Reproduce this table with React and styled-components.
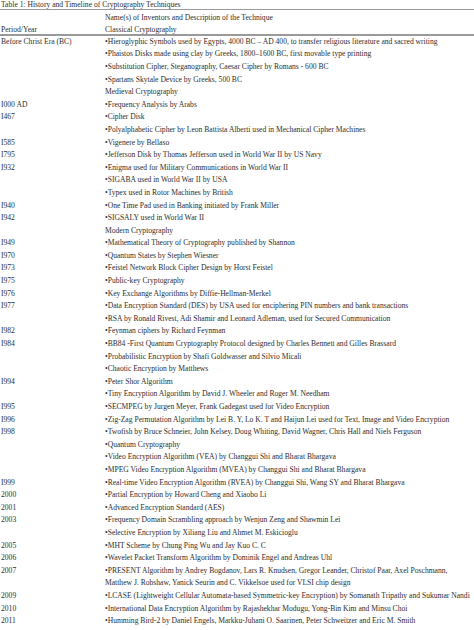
import React from 'react'
import styled, { createGlobalStyle } from 'styled-components'

const GlobalStyle = createGlobalStyle`
  html, body {
    margin: 0;
    padding: 0;
    background: #fff;
  }
`

const Page = styled.div`
  width: 474px;
  font-family: 'Liberation Serif', 'Times New Roman', serif;
  font-size: 7.6px;
  color: #2e2e2e;
`

const Caption = styled.div`
  height: 9px;
  line-height: 9px;
  padding-left: 1px;
  white-space: nowrap;
  border-bottom: 1.5px solid #9a9a9a;
`

const Table = styled.table`
  width: 100%;
  border-collapse: collapse;
  table-layout: fixed;
`

const HeadBody = styled.thead`
  border-bottom: 2px solid #9a9a9a;
`

const Row = styled.tr`
  height: ${(p) => p.$height || 12.6}px;
`

const YearCell = styled.td`
  width: 104px;
  padding: 0 0 0 1px;
  white-space: nowrap;
  vertical-align: middle;
`

const DescCell = styled.td`
  padding: 0;
  white-space: nowrap;
  vertical-align: middle;
`

const rows = [
  ['Before Christ Era (BC)', '•Hieroglyphic Symbols used by Egypts, 4000 BC – AD 400, to transfer religious literature and sacred writing'],
  ['', '•Phaistos Disks made using clay by Greeks, 1800–1600 BC, first movable type printing'],
  ['', '•Substitution Cipher, Steganography, Caesar Cipher by Romans - 600 BC'],
  ['', '•Spartans Skytale Device by Greeks, 500 BC'],
  ['', 'Medieval Cryptography'],
  ['I000 AD', '•Frequency Analysis by Arabs'],
  ['I467', '•Cipher Disk'],
  ['', '•Polyalphabetic Cipher by Leon Battista Alberti used in Mechanical Cipher Machines'],
  ['I585', '•Vigenere by Bellaso'],
  ['I795', '•Jefferson Disk by Thomas Jefferson used in World War II by US Navy'],
  ['I932', '•Enigma used for Military Communications in World War II'],
  ['', '•SIGABA used in World War II by USA'],
  ['', '•Typex used in Rotor Machines by British'],
  ['I940', '•One Time Pad used in Banking initiated by Frank Miller'],
  ['I942', '•SIGSALY used in World War II'],
  ['', 'Modern Cryptography'],
  ['I949', '•Mathematical Theory of Cryptography published by Shannon'],
  ['I970', '•Quantum States by Stephen Wiesner'],
  ['I973', '•Feistel Network Block Cipher Design by Horst Feistel'],
  ['I975', '•Public-key Cryptography'],
  ['I976', '•Key Exchange Algorithms by Diffie-Hellman-Merkel'],
  ['I977', '•Data Encryption Standard (DES) by USA used for enciphering PIN numbers and bank transactions'],
  ['', '•RSA by Ronald Rivest, Adi Shamir and Leonard Adleman, used for Secured Communication'],
  ['I982', '•Feynman ciphers by Richard Feynman'],
  ['I984', '•BB84 -First Quantum Cryptography Protocol designed by Charles Bennett and Gilles Brassard'],
  ['', '•Probabilistic Encryption by Shafi Goldwasser and Silvio Micali'],
  ['', '•Chaotic Encryption by Matthews'],
  ['I994', '•Peter Shor Algorithm'],
  ['', '•Tiny Encryption Algorithm by David J. Wheeler and Roger M. Needham'],
  ['I995', '•SECMPEG by Jurgen Meyer, Frank Gadegast used for Video Encryption'],
  ['I996', '•Zig-Zag Permutation Algorithm by Lei B. Y, Lo K. T and Haijun Lei used for Text, Image and Video Encryption'],
  ['I998', '•Twofish by Bruce Schneier, John Kelsey, Doug Whiting, David Wagner, Chris Hall and Niels Ferguson'],
  ['', '•Quantum Cryptography'],
  ['', '•Video Encryption Algorithm (VEA) by Changgui Shi and Bharat Bhargava'],
  ['', '•MPEG Video Encryption Algorithm (MVEA) by Changgui Shi and Bharat Bhargava'],
  ['I999', '•Real-time Video Encryption Algorithm (RVEA) by Changgui Shi, Wang SY and Bharat Bhargava'],
  ['2000', '•Partial Encryption by Howard Cheng and Xiaobo Li'],
  ['2001', '•Advanced Encryption Standard (AES)'],
  ['2003', '•Frequency Domain Scrambling approach by Wenjun Zeng and Shawmin Lei'],
  ['', '•Selective Encryption by Xiliang Liu and Ahmet M. Eskicioglu'],
  ['2005', '•MHT Scheme by Chung Ping Wu and Jay Kuo C. C'],
  ['2006', '•Wavelet Packet Transform Algorithm by Dominik Engel and Andreas Uhl'],
  ['2007', '•PRESENT Algorithm by Andrey Bogdanov, Lars R. Knudsen, Gregor Leander, Christof Paar, Axel Poschmann,'],
  ['', 'Matthew J. Robshaw, Yanick Seurin and C. Vikkelsoe used for VLSI chip design'],
  ['2009', '•LCASE (Lightweight Cellular Automata-based Symmetric-key Encryption) by Somanath Tripathy and Sukumar Nandi'],
  ['2010', '•International Data Encryption Algorithm by Rajashekhar Modugu, Yong-Bin Kim and Minsu Choi'],
  ['2011', '•Humming Bird-2 by Daniel Engels, Markku-Juhani O. Saarinen, Peter Schweitzer and Eric M. Smith'],
]

const App = () => (
  <Page>
    <GlobalStyle />
    <Caption>Table 1: History and Timeline of Cryptography Techniques</Caption>
    <Table>
      <HeadBody>
        <Row $height={14}>
          <YearCell />
          <DescCell>Name(s) of Inventors and Description of the Technique</DescCell>
        </Row>
        <Row $height={11}>
          <YearCell>Period/Year</YearCell>
          <DescCell>Classical Cryptography</DescCell>
        </Row>
      </HeadBody>
      <tbody>
        {rows.map(([year, text], i) => (
          <Row key={i}>
            <YearCell>{year}</YearCell>
            <DescCell>{text}</DescCell>
          </Row>
        ))}
      </tbody>
    </Table>
  </Page>
)

export default App
